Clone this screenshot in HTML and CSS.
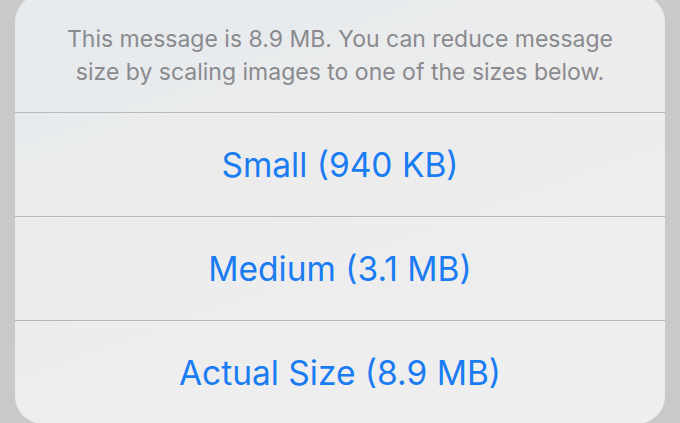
FILE: index.html
```html
<!DOCTYPE html>
<html lang="en">
<head>
  <meta charset="UTF-8">
  <meta name="viewport" content="width=device-width, initial-scale=1.0">
  <title>Message Size</title>
  <link rel="stylesheet" href="styles.css">
</head>
<body>
  <div class="sheet">
    <div class="sheet-header">
      This message is 8.9 MB. You can reduce message size by scaling images to one of the sizes below.
    </div>
    <button class="sheet-option">Small (940 KB)</button>
    <button class="sheet-option">Medium (3.1 MB)</button>
    <button class="sheet-option">Actual Size (8.9 MB)</button>
  </div>
</body>
</html>
```

FILE: styles.css
```css
body {
  margin: 0;
  background-color: #c9c9c9;
  font-family: Inter, "Noto Sans", sans-serif;
  overflow: hidden;
}
.sheet {
  margin: -6px 15px 0 15px;
  border-radius: 28px;
  background: linear-gradient(160deg, #e4eaee 0%, #ececec 40%, #efefef 100%);
  overflow: hidden;
  display: flex;
  flex-direction: column;
}
.sheet-header {
  height: 118px;
  box-sizing: border-box;
  padding: 29px 46px 0 46px;
  text-align: center;
  color: #8a8a8e;
  font-size: 23px;
  line-height: 33px;
}
.sheet-option {
  height: 104px;
  border: none;
  border-top: 1px solid #b9b9bb;
  background: transparent;
  color: #1a7cf3;
  font-family: inherit;
  font-size: 33.5px;
  padding: 0;
  cursor: pointer;
}
```
